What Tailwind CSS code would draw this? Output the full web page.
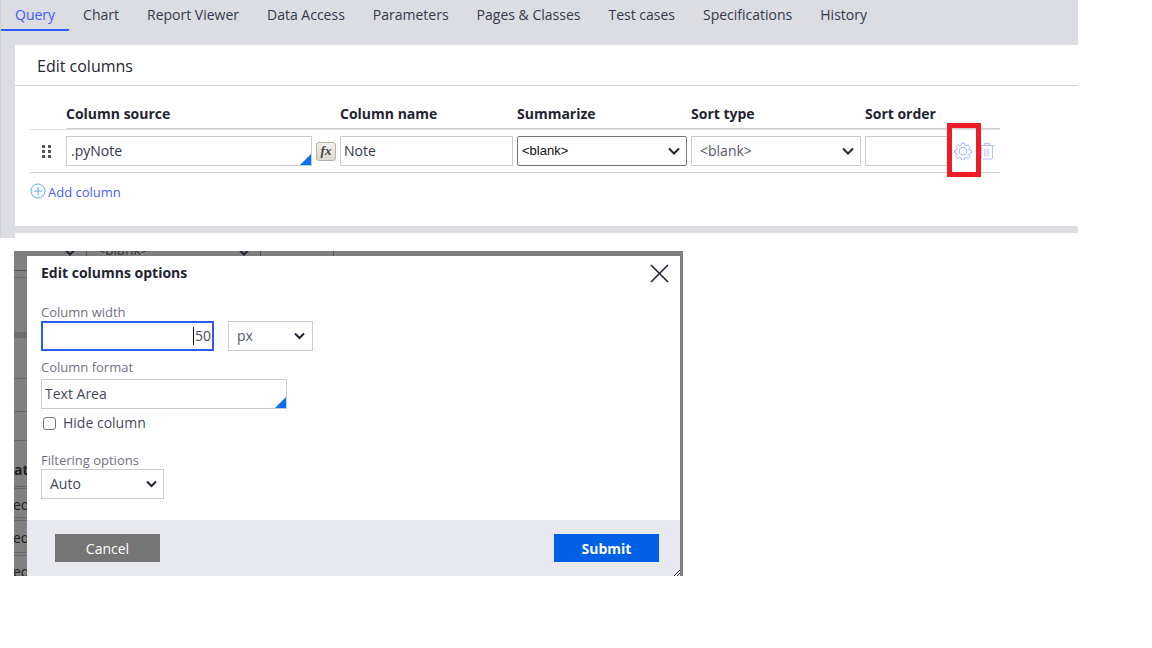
<!DOCTYPE html>
<html lang="en">

<head>
    <meta charset="UTF-8">
    <title>Edit columns</title>
    <script src="https://cdn.jsdelivr.net/npm/@tailwindcss/browser@4"></script>
</head>

<body class="bg-white font-['Open_Sans',sans-serif] text-sm text-[#1f2433] h-[648px] overflow-hidden relative">
    <div class="w-[1078px] h-[238px] bg-[#dcdde2] border-l border-[#cfd0d6] flex flex-col">
        <!-- Tabs -->
        <nav class="flex h-[45px] items-start text-[#33384a]">
            <a class="h-[31px] px-[14px] pt-[5px] border-b-2 border-[#2f5bff] text-[#3d5bff]">Query</a>
            <a class="h-[31px] px-[14px] pt-[5px]">Chart</a>
            <a class="h-[31px] px-[14px] pt-[5px]">Report Viewer</a>
            <a class="h-[31px] px-[14px] pt-[5px]">Data Access</a>
            <a class="h-[31px] px-[14px] pt-[5px]">Parameters</a>
            <a class="h-[31px] px-[14px] pt-[5px]">Pages &amp; Classes</a>
            <a class="h-[31px] px-[14px] pt-[5px]">Test cases</a>
            <a class="h-[31px] px-[14px] pt-[5px]">Specifications</a>
            <a class="h-[31px] px-[14px] pt-[5px]">History</a>
        </nav>

        <section class="ml-[14px] h-[181px] bg-white">
            <h2 class="h-[41px] pl-[22px] pt-[9px] text-base font-medium border-b border-[#cfd0d8]">Edit columns</h2>

            <div class="ml-[15px] w-[970px] relative">
                <div class="grid grid-cols-[36px_274px_177px_174px_174px_135px] h-[42px] pt-[18px] font-bold leading-[20px]">
                    <span></span>
                    <span class="col-start-2">Column source</span>
                    <span>Column name</span>
                    <span>Summarize</span>
                    <span>Sort type</span>
                    <span>Sort order</span>
                </div>
                <div class="ml-[36px] h-[2px] bg-[#cfcfcf]"></div>
                <div class="grid grid-cols-[36px_274px_177px_174px_174px_135px] items-center h-[44px] border-y border-t-[#e0e0e0] border-b-[#d2d2d2] -mt-[1px]">
                    <!-- drag handle -->
                    <svg class="ml-[12px]" width="10" height="14" viewBox="0 0 10 14" fill="#555">
                        <rect x="0" y="1" width="3" height="3" />
                        <rect x="6" y="1" width="3" height="3" />
                        <rect x="0" y="6" width="3" height="3" />
                        <rect x="6" y="6" width="3" height="3" />
                        <rect x="0" y="11" width="3" height="3" />
                        <rect x="6" y="11" width="3" height="3" />
                    </svg>
                    <div class="flex items-center">
                        <div class="relative w-[246px] h-[30px] border border-[#ccc] px-[4px] leading-[28px] text-[#33384a]">
                            .pyNote
                            <span class="absolute right-0 bottom-0 w-0 h-0 border-l-[11px] border-l-transparent border-b-[11px] border-b-[#0b6ff0]"></span>
                        </div>
                        <button class="ml-[4px] w-[20px] h-[19px] rounded-[3px] border border-[#b5b2aa] bg-linear-to-b from-[#f2f0ea] to-[#dcd8ce] font-['Liberation_Serif',serif] italic font-bold text-[13px] leading-[16px] text-[#444]">fx</button>
                    </div>
                    <div class="w-[173px] h-[30px] border border-[#ccc] px-[3px] leading-[28px] text-[#33384a]">Note</div>
                    <div class="relative w-[170px] h-[30px] border border-[#777] rounded-[2px] pl-[4px] leading-[27px] text-[13px] font-['Liberation_Sans',sans-serif] text-[#111]">
                        &lt;blank&gt;
                        <svg class="absolute right-[6px] top-[10px]" width="12" height="8" viewBox="0 0 12 8" fill="none" stroke="#1f2433" stroke-width="2"><path d="M1 1.5l5 5 5-5" /></svg>
                    </div>
                    <div class="relative w-[170px] h-[30px] border border-[#ccc] pl-[8px] leading-[28px] text-[#555a68]">
                        &lt;blank&gt;
                        <svg class="absolute right-[6px] top-[10px]" width="12" height="8" viewBox="0 0 12 8" fill="none" stroke="#1f2433" stroke-width="2"><path d="M1 1.5l5 5 5-5" /></svg>
                    </div>
                    <div class="flex items-center">
                        <div class="w-[87px] h-[30px] border border-[#ccc]"></div>
                        <!-- gear -->
                        <svg class="w-[18px] h-[18px] ml-[2px]" viewBox="0 0 24 24" fill="none" stroke="#9fb0ff" stroke-width="1.4" stroke-linejoin="round">
                            <circle cx="12" cy="12" r="5" />
                            <path d="M10.2 1.8h3.6l.6 3 2.2 1 2.6-1.6 2.5 2.5-1.6 2.6 1 2.2 3 .6v3.6l-3 .6-1 2.2 1.6 2.6-2.5 2.5-2.6-1.6-2.2 1-.6 3h-3.6l-.6-3-2.2-1-2.6 1.6-2.5-2.5 1.6-2.6-1-2.2-3-.6v-3.6l3-.6 1-2.2-1.6-2.6 2.5-2.5 2.6 1.6 2.2-1z" transform="translate(12 12) scale(.95) translate(-12 -13)" />
                        </svg>
                        <!-- trash -->
                        <svg class="w-[16px] h-[18px] ml-[7px]" viewBox="0 0 16 18" fill="none" stroke="#b0bdff" stroke-width="1">
                            <path d="M1 3.5h14M5.5 3.5v-2h5v2M2.5 3.5v12.5a1 1 0 0 0 1 1h9a1 1 0 0 0 1-1v-12.5" />
                            <path d="M5.5 6.5v8M7 6.5v8M8.5 6.5v8M10 6.5v8" stroke="#cfd7ff" />
                        </svg>
                    </div>
                </div>
                <!-- highlight put on the screenshot -->
                <div class="absolute left-[917px] top-[37px] w-[34px] h-[54px] border-[5px] border-[#ee1c25]"></div>

                <div class="flex items-center h-[38px] text-[13px] text-[#4a5cff]">
                    <svg class="mb-[3px]" width="16" height="16" viewBox="0 0 16 16" fill="none" stroke="#5aaed8" stroke-width="1">
                        <circle cx="8" cy="8" r="7" />
                        <path d="M8 4v8M4 8h8" />
                    </svg>
                    <span class="ml-[2px]">Add column</span>
                </div>
            </div>
        </section>

        <div class="ml-[14px] mt-[7px] flex-1 bg-white"></div>
    </div>

    <!-- Modal -->
    <div class="absolute left-[14px] top-[251px] w-[669px] h-[325px] bg-[#808080] flex flex-col pr-[3px]">
        <!-- page showing behind the modal -->
        <div class="h-[5px] shrink-0 overflow-hidden flex text-[#333] leading-[20px]">
            <div class="flex gap-[10px] -mt-[11px] ml-[50px]">
                <svg class="mt-[8px]" width="12" height="8" viewBox="0 0 12 8" fill="none" stroke="#1f2433" stroke-width="2"><path d="M1 1.5l5 5 5-5" /></svg>
                <span class="w-px h-[20px] bg-[#555]"></span>
                <span class="w-[131px]">&lt;blank&gt;</span>
                <svg class="mt-[8px]" width="12" height="8" viewBox="0 0 12 8" fill="none" stroke="#1f2433" stroke-width="2"><path d="M1 1.5l5 5 5-5" /></svg>
                <span class="w-px h-[20px] bg-[#555]"></span>
                <span class="w-px h-[20px] bg-[#555] ml-[62px]"></span>
            </div>
        </div>
        <div class="flex flex-1 min-h-0">
            <div class="w-[13px] overflow-hidden text-[#222] leading-[20px] whitespace-nowrap">
                <div class="mt-[14px] h-px bg-[#555]"></div>
                <div class="mt-[6px] h-px bg-[#6a6a6a]"></div>
                <div class="mt-[54px] h-[6px] bg-[#6e6e72]"></div>
                <div class="mt-[40px] h-px bg-[#666]"></div>
                <div class="mt-[32px] h-px bg-[#666]"></div>
                <div class="mt-[28px] h-px bg-[#666]"></div>
                <div class="mt-[19px] h-[20px] font-bold">at</div>
                <div class="mt-[6px] h-[3px] border-y border-[#666]"></div>
                <div class="mt-[6px] h-[20px] -ml-px">eq</div>
                <div class="mt-[2px] h-[4px] border-y border-[#666]"></div>
                <div class="mt-[7px] h-[20px] -ml-px">eq</div>
                <div class="mt-[4px] h-[4px] border-y border-[#666]"></div>
                <div class="mt-[6px] h-[20px] -ml-px">eq</div>
            </div>

            <div class="flex-1 bg-white flex flex-col relative">
                <div class="flex-1 pl-[14px]">
                    <div class="flex justify-between pr-[11px] pt-[7px] h-[27px]">
                        <h3 class="font-bold leading-[20px]">Edit columns options</h3>
                        <svg class="w-[19px] h-[19px] mt-[1px]" viewBox="0 0 19 19" fill="none" stroke="#1a2233" stroke-width="1.6"><path d="M1 1l17 17M18 1L1 18" /></svg>
                    </div>

                    <label class="block mt-[20px] h-[18px] leading-[18px] text-[13px] text-[#6f7380]">Column width</label>
                    <div class="flex gap-[14px]">
                        <div class="w-[173px] h-[30px] border-2 border-[#2a5cf5] flex justify-end items-center pr-[1px] text-[#444a5a]">
                            <span class="w-px h-[18px] bg-[#111] mr-px"></span>50
                        </div>
                        <div class="w-[85px] h-[30px] border border-[#ccc] pl-[8px] pr-[7px] flex justify-between items-center text-[#555a68]">
                            px
                            <svg width="11" height="8" viewBox="0 0 11 8" fill="none" stroke="#1f2433" stroke-width="2"><path d="M1 1.5l4.5 4.5 4.5-4.5" /></svg>
                        </div>
                    </div>

                    <label class="block mt-[7px] mb-[3px] h-[18px] leading-[18px] text-[13px] text-[#6f7380]">Column format</label>
                    <div class="relative w-[246px] h-[30px] border border-[#ccc] px-[3px] leading-[28px] text-[#444a5a]">
                        Text Area
                        <span class="absolute right-0 bottom-0 w-0 h-0 border-l-[11px] border-l-transparent border-b-[11px] border-b-[#0b6ff0]"></span>
                    </div>

                    <div class="flex items-center mt-[4px] h-[20px] ml-[2px] text-[#444a5a]">
                        <span class="w-[13px] h-[13px] rounded-[3px] border border-[#777] bg-white"></span>
                        <span class="ml-[7px]">Hide column</span>
                    </div>

                    <label class="block mt-[18px] h-[18px] leading-[18px] text-[13px] text-[#6f7380]">Filtering options</label>
                    <div class="w-[123px] h-[30px] border border-[#ccc] pl-[8px] pr-[6px] flex justify-between items-center text-[#444a5a]">
                        Auto
                        <svg width="11" height="8" viewBox="0 0 11 8" fill="none" stroke="#1f2433" stroke-width="2"><path d="M1 1.5l4.5 4.5 4.5-4.5" /></svg>
                    </div>
                </div>

                <div class="h-[56px] bg-[#e8e9ee] flex justify-between pl-[28px] pr-[21px] pt-[14px]">
                    <button class="w-[105px] h-[28px] pt-px bg-[#757575] text-white">Cancel</button>
                    <button class="w-[105px] h-[28px] pt-px bg-[#0060e6] text-white font-bold">Submit</button>
                </div>
                <!-- resize grip -->
                <svg class="absolute right-0 bottom-0" width="6" height="6" viewBox="0 0 6 6" stroke="#333" stroke-width="1"><path d="M0 6l6-6M3 6l3-3" /></svg>
            </div>
        </div>
    </div>
</body>

</html>
